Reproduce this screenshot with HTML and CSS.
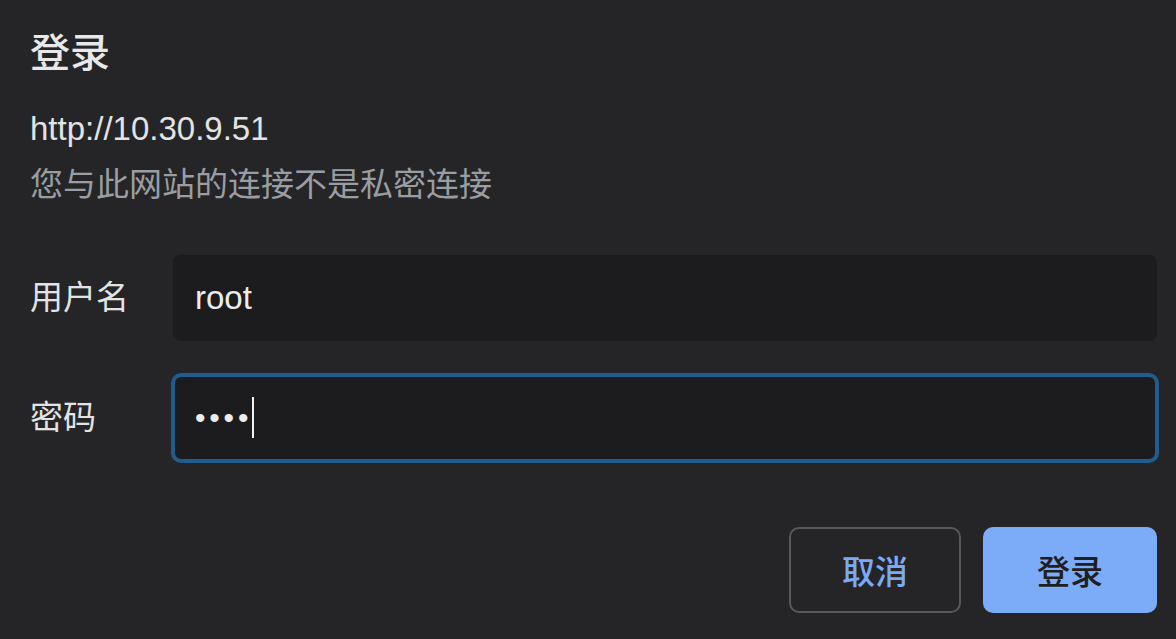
FILE: index.html
```html
<!DOCTYPE html>
<html lang="zh-CN">
<head>
<meta charset="utf-8">
<title>登录</title>
<link rel="stylesheet" href="styles.css">
</head>
<body>
<div class="dialog">
  <h1 class="title">登录</h1>
  <div class="origin">http://10.30.9.51</div>
  <div class="note">您与此网站的连接不是私密连接</div>
  <div class="form">
    <div class="row">
      <div class="label">用户名</div>
      <div class="field"><span class="value">root</span></div>
    </div>
    <div class="row">
      <div class="label">密码</div>
      <div class="field focused"><span class="value dots">••••</span><span class="caret"></span></div>
    </div>
  </div>
  <div class="actions">
    <div class="btn btn-cancel">取消</div>
    <div class="btn btn-primary">登录</div>
  </div>
</div>
</body>
</html>
```

FILE: styles.css
```css
html, body {
  margin: 0;
  padding: 0;
  background: #252527;
  height: 100%;
}
body {
  font-family: "Liberation Sans", "Noto Sans CJK SC", sans-serif;
  color: #e6e6e6;
  overflow: hidden;
}
.dialog {
  padding: 29px 19px 0 30px;
  display: flex;
  flex-direction: column;
}
.title {
  margin: 0;
  font-size: 40px;
  line-height: 48px;
  font-weight: 500;
  color: #e8e8e8;
}
.origin {
  margin-top: 32px;
  font-size: 33px;
  line-height: 40px;
  color: #e3e3e3;
}
.note {
  margin-top: 16px;
  font-size: 33px;
  line-height: 40px;
  color: #9a9da2;
}
.form {
  margin-top: 50px;
  display: flex;
  flex-direction: column;
  gap: 34px;
}
.row {
  display: flex;
  align-items: center;
}
.label {
  width: 143px;
  flex: none;
  font-size: 33px;
  line-height: 40px;
  color: #e3e3e3;
}
.field {
  flex: 1;
  height: 86px;
  box-sizing: border-box;
  background: #1c1c1e;
  border-radius: 8px;
  padding-left: 22px;
  display: flex;
  align-items: center;
  font-size: 33px;
  line-height: 40px;
  color: #ececec;
}
.field.focused {
  outline: 4px solid #1f5d8e;
  outline-offset: -2px;
}
.dots {
  font-size: 30px;
  letter-spacing: 3.8px;
}
.caret {
  display: inline-block;
  width: 2px;
  height: 41px;
  background: #f2f2f2;
  margin-left: 0;
  margin-top: -2px;
}
.actions {
  margin-top: 66px;
  display: flex;
  justify-content: flex-end;
  gap: 22px;
}
.btn {
  height: 86px;
  box-sizing: border-box;
  border-radius: 10px;
  display: flex;
  align-items: center;
  justify-content: center;
  font-size: 33px;
  font-weight: 500;
}
.btn-cancel {
  width: 172px;
  border: 2px solid #57585b;
  color: #7aa9f5;
}
.btn-primary {
  width: 174px;
  background: #7cacf8;
  color: #1f1f21;
}
```
